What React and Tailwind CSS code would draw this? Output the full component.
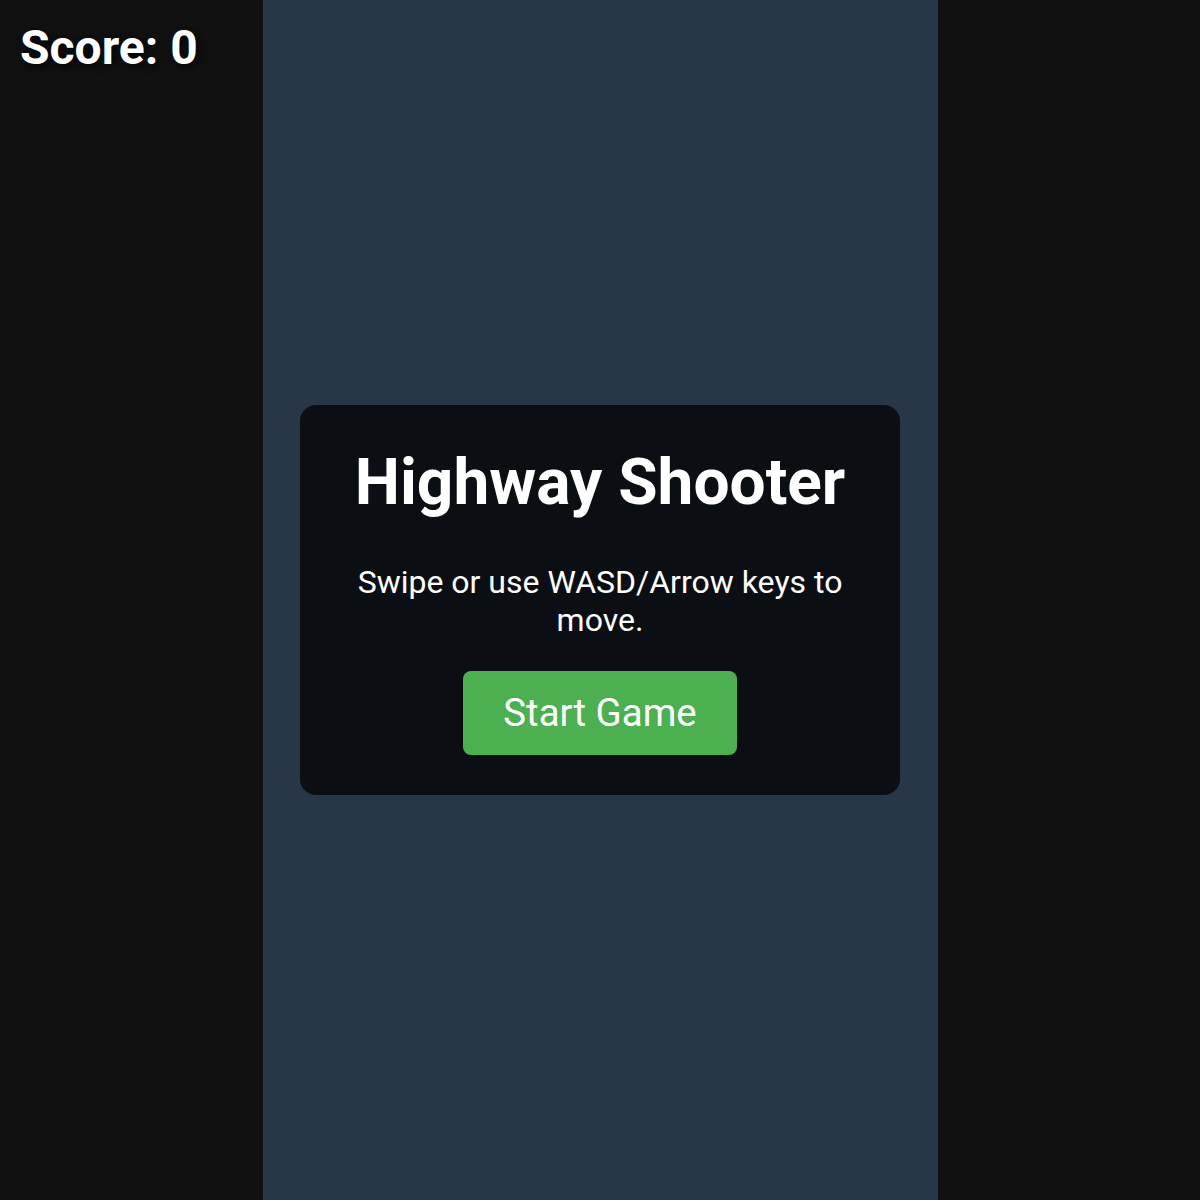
export default function App() {
  return (
    <div className="relative w-full h-[1200px] bg-[#111111] flex justify-center overflow-hidden font-['Roboto',_'Liberation_Sans',_sans-serif]">
      <div className="h-full aspect-[9/16] bg-[#283747] flex items-center justify-center">
        <div className="w-[600px] bg-[#0b0f14] rounded-2xl px-10 pt-10 pb-10 flex flex-col items-center text-center text-white">
          <h1 className="text-[64px] font-bold leading-[1.2] mb-[42px]">Highway Shooter</h1>
          <p className="text-[32px] leading-[38px] mb-8">Swipe or use WASD/Arrow keys to move.</p>
          <button className="bg-[#4caf50] text-white text-[38.4px] px-10 py-[19px] rounded-lg leading-[1.2]">Start Game</button>
        </div>
      </div>
      <div className="absolute top-[19px] left-5 text-white text-[48px] font-bold leading-[1.2] [text-shadow:2px_2px_8px_rgba(0,0,0,0.9)]">Score: 0</div>
    </div>
  );
}
